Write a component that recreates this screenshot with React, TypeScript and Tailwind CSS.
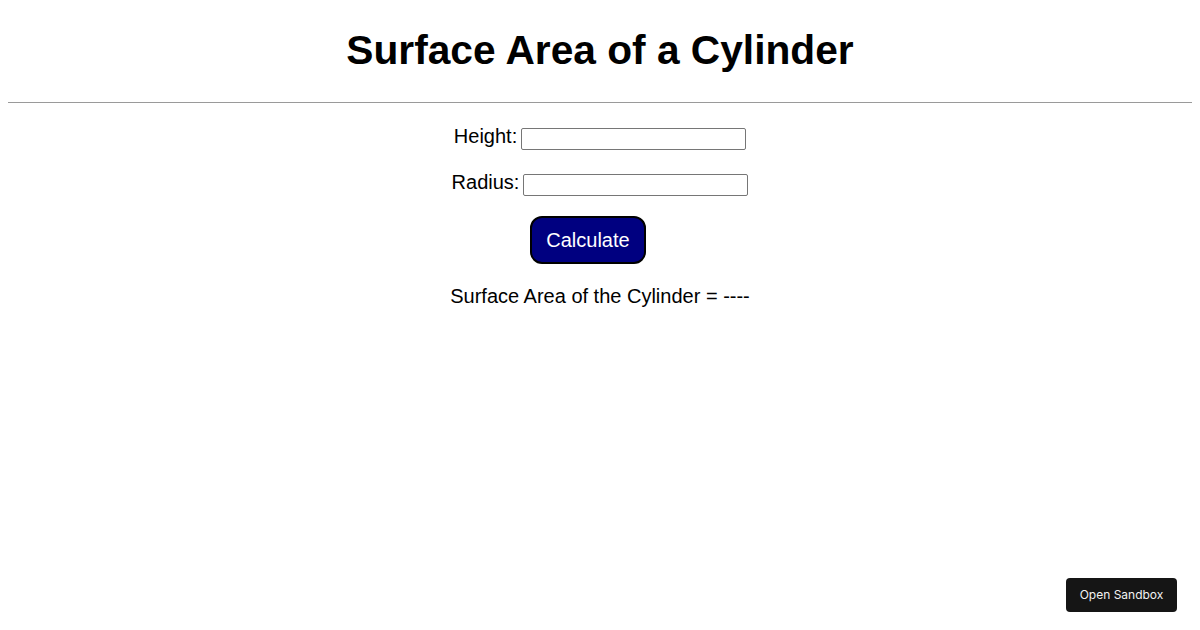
import React, { useState } from "react";

const App = () => {
  const [height, setHeight] = useState("");
  const [radius, setRadius] = useState("");
  const [result, setResult] = useState("----");

  const calculate = () => {
    const h = parseFloat(height);
    const r = parseFloat(radius);
    if (isNaN(h) || isNaN(r)) {
      setResult("----");
      return;
    }
    setResult((2 * Math.PI * r * (r + h)).toFixed(2));
  };

  return (
    <div className="relative w-full h-[630px] bg-white px-2 text-black font-['Liberation_Sans',Arial,sans-serif]">
      {/* Title */}
      <h1 className="pt-[27px] text-center text-[40.7px] leading-[46px] font-bold">
        Surface Area of a Cylinder
      </h1>
      <hr className="mt-[29px] border-0 border-t border-[#9a9a9a]" />

      {/* Form */}
      <div className="flex flex-col items-center text-[20px] leading-[23px]">
        <div className="mt-[22px] flex items-start gap-1">
          <label>Height:</label>
          <input
            value={height}
            onChange={(e) => setHeight(e.target.value)}
            className="mt-[3px] w-[225px] h-[22px] border border-[#767676] rounded-[2px] px-1 text-[13px] outline-none"
          />
        </div>
        <div className="mt-[21px] flex items-start gap-1">
          <label>Radius:</label>
          <input
            value={radius}
            onChange={(e) => setRadius(e.target.value)}
            className="mt-[3px] w-[225px] h-[22px] border border-[#767676] rounded-[2px] px-1 text-[13px] outline-none"
          />
        </div>
        <button
          onClick={calculate}
          className="mt-[20px] mr-[24px] w-[116px] h-[48px] rounded-[12px] border-2 border-black bg-[#000080] text-white text-[20px]"
        >
          Calculate
        </button>
        <p className="mt-[21px]">Surface Area of the Cylinder = {result}</p>
      </div>

      {/* Sandbox badge */}
      <button className="absolute right-[23px] bottom-[18px] w-[111px] h-[34px] rounded-[4px] bg-[#151515] text-[#f2f2f2] text-[12px] font-['Inter',sans-serif]">
        Open Sandbox
      </button>
    </div>
  );
};

export default App;
